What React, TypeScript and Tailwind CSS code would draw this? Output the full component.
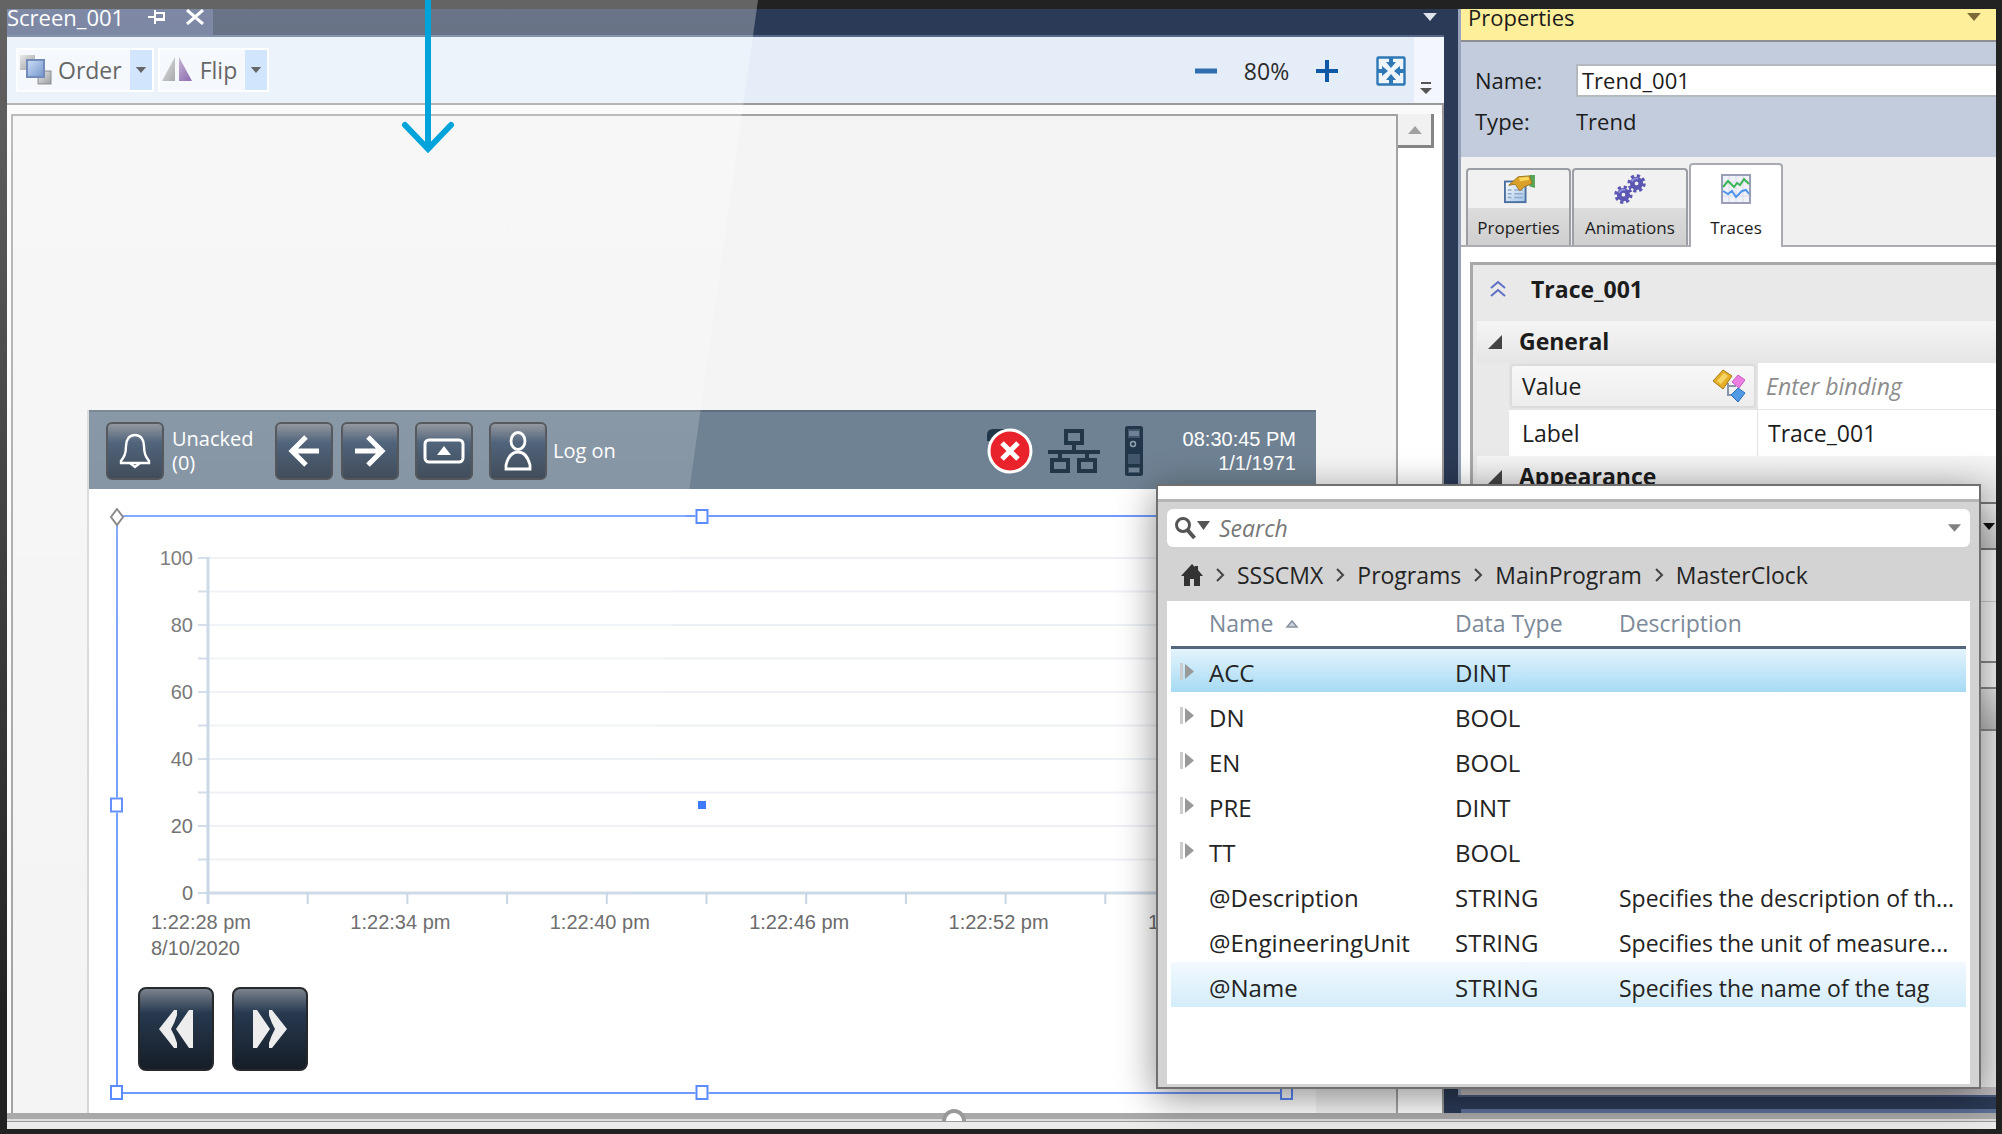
import { useState } from "react"

type Tag = {
  name: string
  type: string
  description?: string
  expandable?: boolean
}

const tags: Tag[] = [
  { name: "ACC", type: "DINT", expandable: true },
  { name: "DN", type: "BOOL", expandable: true },
  { name: "EN", type: "BOOL", expandable: true },
  { name: "PRE", type: "DINT", expandable: true },
  { name: "TT", type: "BOOL", expandable: true },
  { name: "@Description", type: "STRING", description: "Specifies the description of th..." },
  { name: "@EngineeringUnit", type: "STRING", description: "Specifies the unit of measure..." },
  { name: "@Name", type: "STRING", description: "Specifies the name of the tag" },
]

const crumbs = ["SSSCMX", "Programs", "MainProgram", "MasterClock"]

const timeLabels = ["1:22:28 pm", "1:22:34 pm", "1:22:40 pm", "1:22:46 pm", "1:22:52 pm", "1:22:58 pm"]

function Caret({ className }: { className?: string }) {
  return (
    <svg viewBox="0 0 12 7" className={className} fill="currentColor" aria-hidden="true">
      <path d="M0 0h12L6 7z" />
    </svg>
  )
}

function OrderIcon() {
  return (
    <svg viewBox="0 0 32 32" className="h-8 w-8" aria-hidden="true">
      <defs>
        <linearGradient id="orderBlue" x1="0" y1="0" x2="1" y2="1">
          <stop offset="0" stopColor="#b9d3f5" />
          <stop offset="1" stopColor="#3f6cb5" />
        </linearGradient>
        <linearGradient id="orderGray" x1="0" y1="0" x2="1" y2="1">
          <stop offset="0" stopColor="#e0e0e0" />
          <stop offset="1" stopColor="#75787f" />
        </linearGradient>
      </defs>
      <rect x="0" y="1" width="15" height="15" fill="url(#orderGray)" />
      <rect x="17" y="17" width="14" height="14" fill="#fff" />
      <rect x="18" y="17" width="13" height="13" fill="url(#orderGray)" stroke="#5f636c" />
      <rect x="7" y="6" width="17" height="17" fill="url(#orderBlue)" stroke="#3d5fa0" strokeWidth="2" />
    </svg>
  )
}

function FlipIcon() {
  return (
    <svg viewBox="0 0 32 32" className="h-8 w-8" aria-hidden="true">
      <defs>
        <linearGradient id="flipGray" x1="0" y1="0" x2="1" y2="1">
          <stop offset="0" stopColor="#d5d7d8" />
          <stop offset="1" stopColor="#85898b" />
        </linearGradient>
        <linearGradient id="flipPurple" x1="0" y1="0" x2="0.6" y2="1">
          <stop offset="0" stopColor="#b49bc9" />
          <stop offset="1" stopColor="#6b4296" />
        </linearGradient>
      </defs>
      <path d="M13 3v24H0z" fill="url(#flipGray)" />
      <path d="M17 3v24h13z" fill="url(#flipPurple)" />
    </svg>
  )
}

function FitIcon() {
  return (
    <svg viewBox="0 0 30 30" className="h-[30px] w-[30px]" fill="#2f77b5" aria-hidden="true">
      <rect x="1.5" y="1.5" width="27" height="27" rx="1" fill="#eef5fb" stroke="#2f77b5" strokeWidth="2.4" />
      <path d="M13 2h4v4h3l-5 6-5-6h3zM13 28h4v-4h3l-5-6-5 6h3zM2 13v4h4v3l6-5-6-5v3zM28 13v4h-4v3l-6-5 6-5v3z" />
    </svg>
  )
}

function ToolButton({ label, icon }: { label: string; icon: React.ReactNode }) {
  return (
    <div className="flex gap-1 border-2 border-white/80 bg-[#f1f6fb] text-[#2b2b2b]">
      <button type="button" className="flex items-center gap-[6px] pl-[2px] pr-1">
        {icon}
        <span className="text-[23px] leading-10">{label}</span>
      </button>
      <button type="button" aria-label={label + " options"} className="flex w-[22px] items-center justify-center bg-[#bfdcfb]">
        <Caret className="h-[6px] w-3" />
      </button>
    </div>
  )
}

function EditorToolbar() {
  return (
    <div className="flex h-[68px] items-stretch border-b-2 border-[#999] bg-[#e5eef8]">
      <div className="flex items-center gap-1 pl-[9px]">
        <ToolButton label="Order" icon={<OrderIcon />} />
        <ToolButton label="Flip" icon={<FlipIcon />} />
      </div>
      <div className="ml-auto flex items-center pr-2 pt-[2px] text-[23px] text-[#2b2b2b]">
        <button type="button" aria-label="Zoom out" className="h-[22px] w-[22px]">
          <svg viewBox="0 0 22 22" stroke="#2f6fb0" strokeWidth="5"><path d="M0 11h22" /></svg>
        </button>
        <span className="w-[99px] text-center">80%</span>
        <button type="button" aria-label="Zoom in" className="h-[22px] w-[22px]">
          <svg viewBox="0 0 22 22" stroke="#0f59a6" strokeWidth="4"><path d="M0 11h22M11 0v22" /></svg>
        </button>
        <button type="button" aria-label="Zoom to fit" className="ml-[38px]"><FitIcon /></button>
      </div>
      <button type="button" aria-label="Toolbar options" className="flex w-[30px] items-end bg-[#f3f7fd] pb-2 pl-[6px] text-[#555]">
        <svg viewBox="0 0 12 14" className="h-[14px] w-3" fill="currentColor"><path d="M1 1h10v2H1zM0 7h12l-6 6z" /></svg>
      </button>
    </div>
  )
}

const hmiButton =
  "flex h-[58px] w-[58px] items-center justify-center rounded-md border-2 border-[#33373c] bg-linear-to-b from-[#7d828a] via-[#2c4460] via-35% to-[#1d2b3b] text-white"

function HmiHeader() {
  return (
    <div className="flex h-[79px] items-center border-t-2 border-[#5f6f7e] bg-[#6f8293] pl-[17px] pr-5 text-[20px] leading-6 text-white">
      <button type="button" aria-label="Alarms" className={hmiButton}>
        <svg viewBox="0 0 34 38" className="h-[38px] w-[34px]" fill="none" stroke="currentColor" strokeWidth="2.4">
          <path d="M17 3c-6 0-9 5-9 11 0 8-2 11-5 15v2h28v-2c-3-4-5-7-5-15 0-6-3-11-9-11z" />
          <path d="M12 31l5 4 5-4" />
        </svg>
      </button>
      <div className="ml-2 w-[103px]">
        Unacked
        <br />
        (0)
      </div>
      <button type="button" aria-label="Back" className={hmiButton}>
        <svg viewBox="0 0 32 32" className="h-8 w-8" fill="none" stroke="currentColor" strokeWidth="5"><path d="M31 16H4M18 2L4 16l14 14" /></svg>
      </button>
      <button type="button" aria-label="Forward" className={hmiButton + " ml-2"}>
        <svg viewBox="0 0 32 32" className="h-8 w-8" fill="none" stroke="currentColor" strokeWidth="5"><path d="M1 16h27M14 2l14 14-14 14" /></svg>
      </button>
      <button type="button" aria-label="Keyboard" className={hmiButton + " ml-4"}>
        <svg viewBox="0 0 42 26" className="h-[26px] w-[42px]">
          <rect x="2" y="2" width="38" height="22" rx="4" fill="none" stroke="currentColor" strokeWidth="3" />
          <path d="M14 17h14l-7-9z" fill="currentColor" />
        </svg>
      </button>
      <button type="button" aria-label="User" className={hmiButton + " ml-4"}>
        <svg viewBox="0 0 30 40" className="h-10 w-[30px]" fill="none" stroke="currentColor" strokeWidth="2.8">
          <ellipse cx="15" cy="10" rx="7" ry="8.5" />
          <path d="M3 38v-4c2-8 5-13 12-13s10 5 12 13v4z" />
        </svg>
      </button>
      <span className="ml-[6px]">Log on</span>

      <svg viewBox="0 0 48 48" className="ml-auto h-12 w-12" aria-label="Not connected">
        <path d="M2 8q0-6 6-6h12v12H2z" fill="#22364a" />
        <circle cx="25" cy="24" r="21" fill="#e8232b" stroke="#fff" strokeWidth="3" />
        <path d="M17 16l16 16M33 16L17 32" stroke="#fff" strokeWidth="5" />
      </svg>
      <svg viewBox="0 0 52 48" className="ml-[15px] h-12 w-[52px]" fill="none" stroke="#22364a" strokeWidth="4" aria-hidden="true">
        <rect x="18" y="4" width="16" height="12" />
        <rect x="4" y="33" width="16" height="11" />
        <rect x="31" y="33" width="16" height="11" />
        <path d="M26 16v8M0 25h52M12 25v8M39 25v8" />
      </svg>
      <svg viewBox="0 0 18 50" className="ml-[25px] h-[50px] w-[18px]" aria-hidden="true">
        <rect x="1.5" y="1.5" width="15" height="47" rx="1" fill="#42566b" stroke="#22364a" strokeWidth="3" />
        <path d="M3 12h12v16H3zM3 38h12v3H3z" fill="#22364a" />
        <rect x="4" y="5" width="10" height="5" fill="#6f8293" />
        <circle cx="8" cy="18" r="2.5" fill="none" stroke="#8fa0b0" strokeWidth="1.5" />
        <rect x="4" y="42" width="10" height="4" fill="#6f8293" />
      </svg>
      <div className="ml-10 text-right font-['Liberation_Sans',sans-serif]">
        08:30:45 PM
        <br />
        1/1/1971
      </div>
    </div>
  )
}

function TrendChart() {
  // one grid line per 10 units, labels every 20
  const rows = Array.from({ length: 11 }, (_, i) => ({ value: 100 - i * 10, y: 41 + i * 33.5 }))

  return (
    <svg className="block h-[450px] w-full font-['Liberation_Sans',sans-serif] text-[20px]" fill="#6b6b6b" role="img" aria-label="Trend">
      {rows.map((row) => (
        <g key={row.value}>
          <line x1="90" x2="97%" y1={row.y} y2={row.y} stroke="#edf1f5" strokeWidth="2" />
          <line x1="80" x2="90" y1={row.y} y2={row.y} stroke="#cfdbe8" strokeWidth="2" />
          {row.value % 20 === 0 && (
            <text x="75" y={row.y + 7} textAnchor="end">{row.value}</text>
          )}
        </g>
      ))}
      <line x1="90" x2="90" y1="40" y2="387" stroke="#c6d5e5" strokeWidth="3" />
      <line x1="90" x2="97%" y1="376" y2="376" stroke="#ccd9e6" strokeWidth="3" />
      {Array.from({ length: 11 }, (_, i) => (
        <line key={i} x1={90 + i * 99.7} x2={90 + i * 99.7} y1="376" y2="387" stroke="#c6d5e5" strokeWidth="2" />
      ))}
      {timeLabels.map((label, i) => (
        <text key={label} x={83 + i * 199.4} y="412" textAnchor="middle">{label}</text>
      ))}
      <text x="33" y="438">8/10/2020</text>
    </svg>
  )
}

const trendButton =
  "flex h-[84px] w-[76px] items-center justify-center rounded-lg border-2 border-[#26282b] bg-linear-to-b from-[#7b828c] via-[#27394f] via-30% to-[#151e28]"

const handle = "absolute h-[15px] w-[13px] border-2 border-[#5a8bff] bg-white"

function SelectedTrend() {
  return (
    <div className="relative mb-[18px] ml-[27px] mr-[29px] mt-[26px] h-[579px] border-2 border-[#6f9bff]">
      <TrendChart />
      <div className="flex gap-[18px] pl-5 pt-5">
        <button type="button" aria-label="Scroll back" className={trendButton}>
          <svg viewBox="0 0 34 40" className="h-10 w-[34px]" fill="#ededee">
            <path d="M18 1v5q-2 7-6 14 4 7 6 14v5h-3L0 20 15 1zM34 1v38h-4L17 20 30 1z" />
          </svg>
        </button>
        <button type="button" aria-label="Scroll forward" className={trendButton}>
          <svg viewBox="0 0 34 40" className="h-10 w-[34px]" fill="#ededee">
            <path d="M16 1v5q2 7 6 14-4 7-6 14v5h3l15-19L19 1zM0 1v38h4l13-19L4 1z" />
          </svg>
        </button>
      </div>
      <svg viewBox="0 0 16 18" className="absolute -left-[9px] -top-[9px] h-[18px] w-4" fill="#fff" stroke="#777" strokeWidth="2">
        <path d="M8 1l6 8-6 8-6-8z" />
      </svg>
      <span className={handle + " -top-2 left-1/2 -translate-x-1/2"} />
      <span className={handle + " -bottom-2 left-1/2 -translate-x-1/2"} />
      <span className={handle + " -left-2 top-1/2 -translate-y-1/2"} />
      <span className={handle + " -bottom-2 -left-2"} />
      <span className={handle + " -bottom-2 -right-2"} />
      <span className="absolute left-1/2 top-1/2 h-2 w-2 -translate-x-1/2 -translate-y-1/2 bg-[#3f7bff]" />
    </div>
  )
}

function ScreenEditor() {
  return (
    <section className="flex min-w-0 flex-1 flex-col">
      <div className="flex h-7 items-start border-b-2 border-[#566789] bg-[#2b3a56]">
        <div className="flex h-[26px] w-[206px] items-start bg-[#48577f] text-white">
          <span className="-mt-1 text-[22px] leading-6">Screen_001</span>
          <svg viewBox="0 0 18 14" className="ml-6 mt-px h-[14px] w-[18px]" fill="none" stroke="currentColor" strokeWidth="2">
            <path d="M0 7h6M7 0v14M7 3h9v7H7M7 9h9" />
          </svg>
          <button type="button" aria-label="Close" className="ml-5">
            <svg viewBox="0 0 18 16" className="h-4 w-[18px]" stroke="currentColor" strokeWidth="3"><path d="M1 1l16 14M17 1L1 15" /></svg>
          </button>
        </div>
        <Caret className="ml-auto mr-[6px] mt-1 h-2 w-4 text-[#dfe4ec]" />
      </div>
      <EditorToolbar />
      <div className="flex flex-1 border-r-2 border-[#999] bg-[#fafafa] pl-1 pt-[9px]">
        <div className="min-w-0 flex-1 border-l-2 border-r-2 border-t-2 border-[#a3a3a3] bg-[#f4f4f4] pl-[74px] pr-20 pt-[294px]">
          <div className="border-l-2 border-[#d6d6d6] bg-white pb-px">
            <HmiHeader />
            <SelectedTrend />
          </div>
        </div>
        <div className="w-[44px] bg-white">
          <button type="button" aria-label="Scroll up" className="flex h-[34px] w-9 items-center justify-center border-b-[3px] border-r-[3px] border-[#858585] bg-[#f1f1f1]">
            <Caret className="h-2 w-4 rotate-180 text-[#a0a0a0]" />
          </button>
        </div>
      </div>
    </section>
  )
}

function PropertiesTabIcon() {
  return (
    <svg viewBox="0 0 34 32" className="h-[30px] w-[34px]" aria-hidden="true">
      <defs>
        <linearGradient id="sheet" x1="0" y1="0" x2="1" y2="1">
          <stop offset="0" stopColor="#fff" />
          <stop offset="1" stopColor="#9fc2e8" />
        </linearGradient>
      </defs>
      <rect x="2" y="8" width="22" height="22" fill="url(#sheet)" stroke="#4b6f9e" strokeWidth="2" />
      <path d="M5 17h4M12 17h9M5 21h4M12 21h9M5 25h4M12 25h9" stroke="#8fa9ca" strokeWidth="1.5" />
      <path d="M28 1h6v14l-6-2z" fill="#55a455" />
      <path d="M6 12l10-9 12-1 3 8-9 4-4 4-5-7z" fill="#d9a02a" stroke="#9b7320" />
      <path d="M17 4l10-1 1 3-10 2z" fill="#fbd65c" />
    </svg>
  )
}

function GearsIcon() {
  return (
    <svg viewBox="0 0 34 32" className="h-[30px] w-[34px]" fill="none" stroke="#5b57b3" aria-hidden="true">
      <circle cx="24" cy="10" r="4.5" strokeWidth="5" />
      <circle cx="24" cy="10" r="8" strokeWidth="3.5" strokeDasharray="3.4 2.880" />
      <circle cx="10" cy="22" r="4.5" strokeWidth="5" />
      <circle cx="10" cy="22" r="8" strokeWidth="3.5" strokeDasharray="3.4 2.880" />
      <path d="M19 8a6 6 0 0 1 7-3M5 20a6 6 0 0 1 7-3" stroke="#8f8ddb" strokeWidth="2" />
    </svg>
  )
}

function TracesIcon() {
  return (
    <svg viewBox="0 0 30 30" className="h-[30px] w-[30px]" fill="none" aria-hidden="true">
      <rect x="1" y="1" width="28" height="28" fill="#f1f1fa" stroke="#9a9fb8" strokeWidth="2" />
      <path d="M8 2v26M15 2v26M22 2v26M2 8h26M2 22h26" stroke="#dadbea" />
      <path d="M2 13l5-6 6 6 3-4 3 2 4-6 5 5" stroke="#3db554" strokeWidth="2" />
      <path d="M2 17l5 3 4-3 4 6 6-6 4-1 3 4" stroke="#4d94e8" strokeWidth="2" />
    </svg>
  )
}

function BindingIcon() {
  return (
    <svg viewBox="0 0 34 34" className="h-[34px] w-[34px]" aria-hidden="true">
      <path d="M16 14v12h8M16 17h8" fill="none" stroke="#8a97a8" strokeWidth="2" />
      <path d="M1 12L11 1l9 6-9 13z" fill="#e5b028" stroke="#a87a14" />
      <path d="M5 12l7-8 4 3-7 8z" fill="#f7d468" />
      <path d="M20 13l6-7 7 5-6 8z" fill="#ee7fe2" stroke="#c95bc0" />
      <path d="M19 26l7-7 7 5-7 9z" fill="#4f9be6" stroke="#2b6cb5" />
    </svg>
  )
}

const panelTabs = [
  { name: "Properties", icon: <PropertiesTabIcon />, width: "w-[105px]" },
  { name: "Animations", icon: <GearsIcon />, width: "w-[116px]" },
  { name: "Traces", icon: <TracesIcon />, width: "w-[94px]" },
]

function CategoryRow({ title }: { title: string }) {
  return (
    <div className="flex h-[42px] items-center bg-linear-to-b from-[#f5f5f5] to-[#e5e5e5] pb-px pl-[11px] font-bold">
      <svg viewBox="0 0 14 14" className="mr-[17px] h-[14px] w-[14px]" fill="#444"><path d="M14 0v14H0z" /></svg>
      {title}
    </div>
  )
}

function PropertiesPanel() {
  const [active, setActive] = useState("Traces")
  const [name, setName] = useState("Trend_001")

  return (
    <section className="flex w-[552px] shrink-0 flex-col bg-[#2b3a56] pl-[14px] text-[22px] text-[#1c1c1c]">
      <div className="flex min-h-0 flex-1 flex-col border-l-[3px] border-[#97a3bb] bg-white">
        <div className="flex h-[33px] items-start justify-between border-b-2 border-[#8d8f92] bg-[#fef09b] pl-[7px] pr-[15px]">
          <h2 className="-mt-1 font-medium leading-6">Properties</h2>
          <Caret className="mt-1 h-2 w-[14px] text-[#7c6a3a]" />
        </div>
        <div className="grid h-[115px] grid-cols-[101px_1fr] content-start items-center bg-[#c3ccdc] pl-[14px] pt-[22px]">
          <label htmlFor="element-name">Name:</label>
          <input
            id="element-name"
            value={name}
            onChange={(e) => setName(e.target.value)}
            className="h-[33px] min-w-0 border-y-2 border-l-2 border-[#b4b8bf] bg-white pl-1"
          />
          <span className="leading-[48px]">Type:</span>
          <span className="leading-[48px]">Trend</span>
        </div>
        <div className="flex h-[90px] items-end gap-px border-b-2 border-[#acacb2] bg-[#f0f0f0] pl-[5px]">
          {panelTabs.map((tab) => (
            <button
              key={tab.name}
              type="button"
              onClick={() => setActive(tab.name)}
              className={
                tab.name === active
                  ? "-mb-[2px] flex h-[84px] flex-col items-center gap-[14px] rounded-t border-2 border-b-0 border-[#a9abb3] bg-white pt-[9px] " + tab.width
                  : "flex h-[77px] flex-col items-center gap-[14px] rounded-t border-2 border-b-0 border-[#9c9ea6] bg-linear-to-b from-[#f1f1f1] from-50% via-[#dcdcdc] via-51% to-[#cfcfcf] pt-1 " + tab.width
              }
            >
              {tab.icon}
              <span className="text-[17px] leading-5">{tab.name}</span>
            </button>
          ))}
        </div>

        <div className="ml-[9px] mt-[15px] flex-1 border-l-[3px] border-t-[3px] border-[#a8a8a8] bg-[#e9e9e9] text-[23px]">
          <div className="flex h-14 items-center pb-2 pl-[17px] font-bold">
            <svg viewBox="0 0 16 18" className="mr-[25px] h-[18px] w-4" fill="none" stroke="#5f6fc4" strokeWidth="2">
              <path d="M1 8l7-6 7 6M1 16l7-6 7 6" />
            </svg>
            Trace_001
          </div>
          <div className="pl-1">
            <CategoryRow title="General" />
            <div className="ml-8 grid grid-cols-[248px_1fr] gap-px bg-[#e4e4e4]">
              <label htmlFor="binding" className="m-px flex h-[44px] items-center justify-between rounded-sm border-2 border-[#dcdcdc] bg-linear-to-b from-[#f8f8f8] to-[#ededed] pl-[10px] pr-2">
                Value
                <BindingIcon />
              </label>
              <input id="binding" placeholder="Enter binding" className="min-w-0 bg-white pl-2 placeholder:italic placeholder:text-[#8c8c8c]" />
              <label htmlFor="trace-label" className="flex h-[46px] items-center bg-white pl-[13px]">Label</label>
              <input id="trace-label" defaultValue="Trace_001" className="min-w-0 bg-white pl-[10px]" />
            </div>
            <CategoryRow title="Appearance" />
          </div>
          <div className="mt-1 flex h-12 items-center justify-end border-y-2 border-[#777] bg-linear-to-b from-[#eee] to-[#c9c9c9]">
            <Caret className="mr-px h-[9px] w-3 text-[#111]" />
          </div>
          <div className="h-[52px] border-b border-[#ccc] bg-white/50" />
          <div className="h-[61px] border-b-2 border-[#888] bg-white/50" />
          <div className="h-6 bg-white/50" />
          <div className="h-[44px] border-y-2 border-[#888] bg-linear-to-b from-[#e5e5e5] to-[#bbb]" />
        </div>
        <div className="h-2 bg-[#bdbabd]" />
      </div>
      <div className="h-[14px] border-t-2 border-[#4a5b80]" />
      <div className="ml-[3px] h-1 bg-[#5d6f97]" />
    </section>
  )
}

function TagBrowser() {
  const [selected, setSelected] = useState("ACC")

  return (
    <div className="absolute right-[21px] top-[484px] w-[825px] border-2 border-[#6f6f6f] bg-[#d3d3d3] px-[9px] pb-[3px] text-[23px] text-[#242424] shadow-[0_8px_36px_rgba(0,0,0,0.45)]">
      <div className="-mx-[9px] h-4 border-b-[3px] border-[#b5b5b5] bg-white" />
      <div className="mt-[7px] flex h-[38px] items-center rounded-md bg-white pl-2 pr-[9px]">
        <svg viewBox="0 0 36 24" className="h-6 w-9" fill="none" stroke="#555" strokeWidth="3" aria-hidden="true">
          <circle cx="8" cy="9" r="6.500" />
          <path d="M12.500 14l7 8" strokeWidth="4" />
          <path d="M22 5h13l-6.500 9z" fill="#555" stroke="none" />
        </svg>
        <input aria-label="Search" placeholder="Search" className="min-w-0 flex-1 bg-transparent pl-2 placeholder:italic placeholder:text-[#777]" />
        <Caret className="h-[10px] w-[13px] text-[#808080]" />
      </div>

      <nav className="flex h-[54px] items-center pl-[14px] pt-[2px]">
        <svg viewBox="0 0 22 22" className="h-[22px] w-[22px]" fill="#333"><path d="M11 0l3 3V2h3v4l5 6h-3v10h-6v-7H9v7H3V12H0z" /></svg>
        {crumbs.map((crumb) => (
          <a key={crumb} href="#" className="flex items-center">
            <svg viewBox="0 0 10 14" className="ml-3 mr-3 h-[14px] w-[10px]" fill="none" stroke="#444" strokeWidth="2"><path d="M2 1l6 6-6 6" /></svg>
            {crumb}
          </a>
        ))}
      </nav>

      <div className="h-[483px] bg-white px-1">
        <table className="w-full table-fixed border-collapse text-left">
          <thead>
            <tr className="h-[46px] border-b-[3px] border-[#53667d] text-[#7d8a99]">
              <th className="w-[282px] pl-[38px] font-normal">
                <span className="flex items-center gap-3">
                  Name
                  <svg viewBox="0 0 14 9" className="h-[9px] w-[14px]" fill="#ccd3db" stroke="#8792a0" strokeWidth="1.500"><path d="M2 8l5-6 5 6z" /></svg>
                </span>
              </th>
              <th className="w-[164px] pl-[2px] font-normal">Data Type</th>
              <th className="pl-[2px] font-normal">Description</th>
            </tr>
          </thead>
          <tbody className="text-[24px] leading-8">
            {tags.map((tag) => (
              <tr
                key={tag.name}
                onClick={() => setSelected(tag.name)}
                className={
                  tag.name === selected
                    ? "h-[45px] bg-linear-to-b from-[#e6f5fd] to-[#a6daf4]"
                    : tag.name === "@Name"
                      ? "h-[45px] bg-linear-to-b from-[#f2f9fe] to-[#d3edfa]"
                      : "h-[45px]"
                }
              >
                <td className="pt-[6px]">
                  <span className="flex items-center">
                    <span className="w-[38px] pb-1 pl-2">
                      {tag.expandable && (
                        <svg viewBox="0 0 15 17" className="h-[17px] w-[15px]"><path d="M1 0h3v17H1z" fill="#ccc" /><path d="M6 1l9 7.500L6 16z" fill="#999" /></svg>
                      )}
                    </span>
                    {tag.name}
                  </span>
                </td>
                <td className="pl-[2px] pt-[6px]">{tag.type}</td>
                <td className="whitespace-nowrap pl-[2px] pt-[6px] text-[23px]">{tag.description}</td>
              </tr>
            ))}
          </tbody>
        </table>
      </div>
    </div>
  )
}

export default function App() {
  return (
    <div className="relative flex min-h-screen flex-col overflow-hidden bg-[#222] pb-[7px] pl-[7px] pr-[6px] pt-[9px] font-['Open_Sans','Noto_Sans',sans-serif]">
      <main className="flex flex-1">
        <ScreenEditor />
        <PropertiesPanel />
      </main>
      <footer className="relative h-4 border-t-[6px] border-[#a9a9a9] bg-[#ebebeb]">
        <div className="h-[3px] border-b border-[#999] bg-[#ddd]" />
        <svg viewBox="0 0 24 12" className="absolute -top-[10px] left-[47%] h-3 w-6" fill="#fff" stroke="#999" strokeWidth="4">
          <path d="M2 12a10 10 0 0 1 20 0" />
        </svg>
      </footer>

      {/* glass glare across the upper left */}
      <div className="pointer-events-none absolute left-0 top-0 h-full w-[758px] bg-linear-to-b from-white/30 to-transparent to-90% [clip-path:polygon(0_0,100%_0,79%_100%,0_100%)]" />

      <TagBrowser />

      <svg viewBox="0 0 54 156" className="absolute left-[401px] top-0 h-[156px] w-[54px]" fill="none" stroke="#00a3da" strokeWidth="6" strokeLinecap="round" aria-hidden="true">
        <path d="M27 0v148M4 125l23 24 23-24" />
      </svg>
    </div>
  )
}
